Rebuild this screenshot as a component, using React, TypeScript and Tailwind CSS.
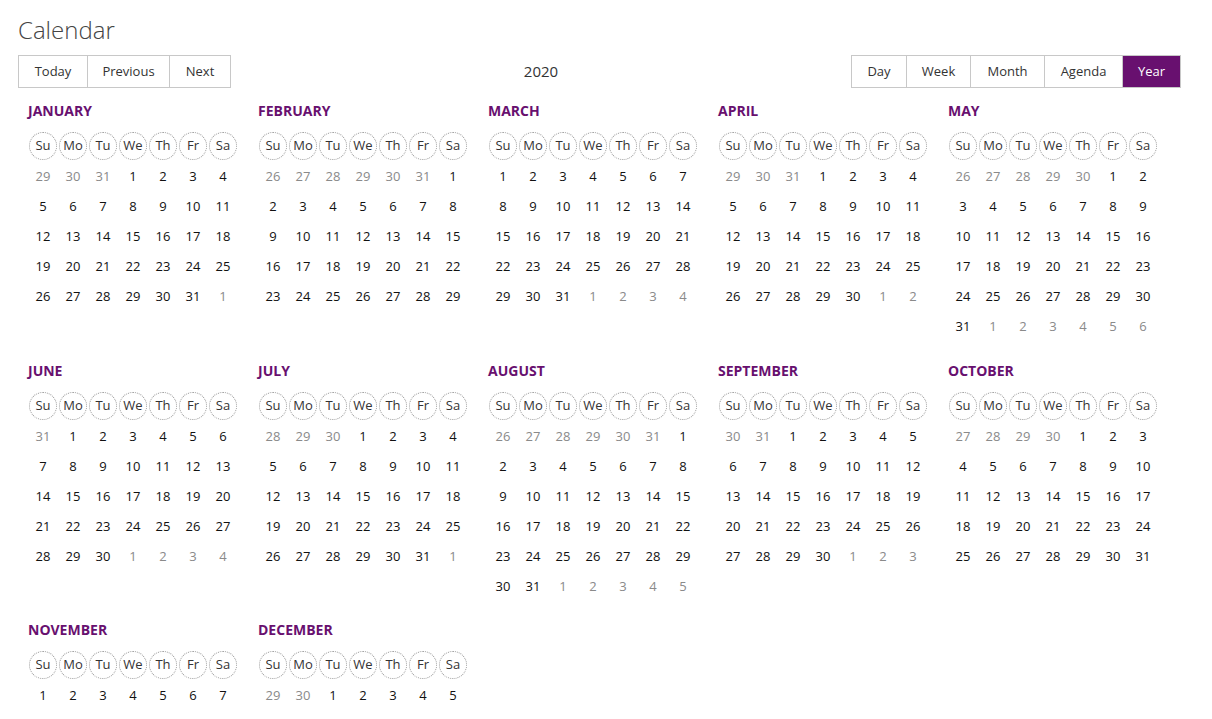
import React from 'react';

const MONTHS = [
  'January', 'February', 'March', 'April', 'May', 'June',
  'July', 'August', 'September', 'October', 'November', 'December',
];
const WEEKDAYS = ['Su', 'Mo', 'Tu', 'We', 'Th', 'Fr', 'Sa'];
const YEAR = 2020;

type Cell = { day: number; inMonth: boolean };

// weeks of a month, padded with days of the months around it
function buildWeeks(year: number, month: number): Cell[][] {
  const first = new Date(year, month, 1);
  const start = new Date(year, month, 1 - first.getDay());
  const last = new Date(year, month + 1, 0);
  const end = new Date(year, month + 1, 6 - last.getDay());
  const weeks: Cell[][] = [];
  let week: Cell[] = [];
  for (let d = new Date(start); d <= end; d.setDate(d.getDate() + 1)) {
    week.push({ day: d.getDate(), inMonth: d.getMonth() === month });
    if (week.length === 7) {
      weeks.push(week);
      week = [];
    }
  }
  return weeks;
}

const ToolButton = ({ label, width, active }: { label: string; width: string; active?: boolean }) => (
  <button
    className={`${width} h-[31px] border-r border-[#c8c8c8] last:border-r-0 text-[13px] ${
      active ? 'bg-[#68106f] text-white' : 'bg-white text-[#333]'
    }`}
  >
    {label}
  </button>
);

const MonthBlock = ({ month }: { month: number }) => {
  const weeks = buildWeeks(YEAR, month);
  return (
    <div className="w-[230px] pl-[10px] h-[259.5px]">
      <div className="h-[20px] leading-[20px] text-[14px] font-bold uppercase text-[#68106f]">
        {MONTHS[month]}
      </div>
      <div className="mt-[10px] mb-[1px] flex h-[30px] items-center">
        {WEEKDAYS.map((w) => (
          <div key={w} className="w-[30px] flex justify-center">
            <div className="w-[28px] h-[28px] rounded-full border border-dotted border-[#999] flex items-center justify-center text-[13px] text-[#333]">
              {w}
            </div>
          </div>
        ))}
      </div>
      {weeks.map((wk, i) => (
        <div key={i} className="flex h-[30px] items-center">
          {wk.map((c, j) => (
            <div
              key={j}
              className={`w-[30px] text-center text-[13px] ${c.inMonth ? 'text-[#111]' : 'text-[#8a8a8a]'}`}
            >
              {c.day}
            </div>
          ))}
        </div>
      ))}
    </div>
  );
};

export default function App() {
  return (
    <div
      className="min-h-screen bg-white px-[18px] pt-[14px]"
      style={{ fontFamily: '"Segoe UI", "Open Sans", "Noto Sans", sans-serif' }}
    >
      <h1 className="text-[24px] font-light leading-[32px] text-[#444]">Calendar</h1>
      <div className="mt-[9px] flex items-center justify-between pr-[13px]">
        <div className="flex border border-[#c8c8c8]">
          <ToolButton label="Today" width="w-[69px]" />
          <ToolButton label="Previous" width="w-[82px]" />
          <ToolButton label="Next" width="w-[60px]" />
        </div>
        <div className="text-[15px] text-[#333]">{YEAR}</div>
        <div className="flex border border-[#c8c8c8]">
          <ToolButton label="Day" width="w-[55px]" />
          <ToolButton label="Week" width="w-[64px]" />
          <ToolButton label="Month" width="w-[74px]" />
          <ToolButton label="Agenda" width="w-[78px]" />
          <ToolButton label="Year" width="w-[57px]" active />
        </div>
      </div>
      <div className="mt-[13px] flex flex-wrap">
        {MONTHS.map((_, i) => (
          <MonthBlock key={i} month={i} />
        ))}
      </div>
    </div>
  );
}
